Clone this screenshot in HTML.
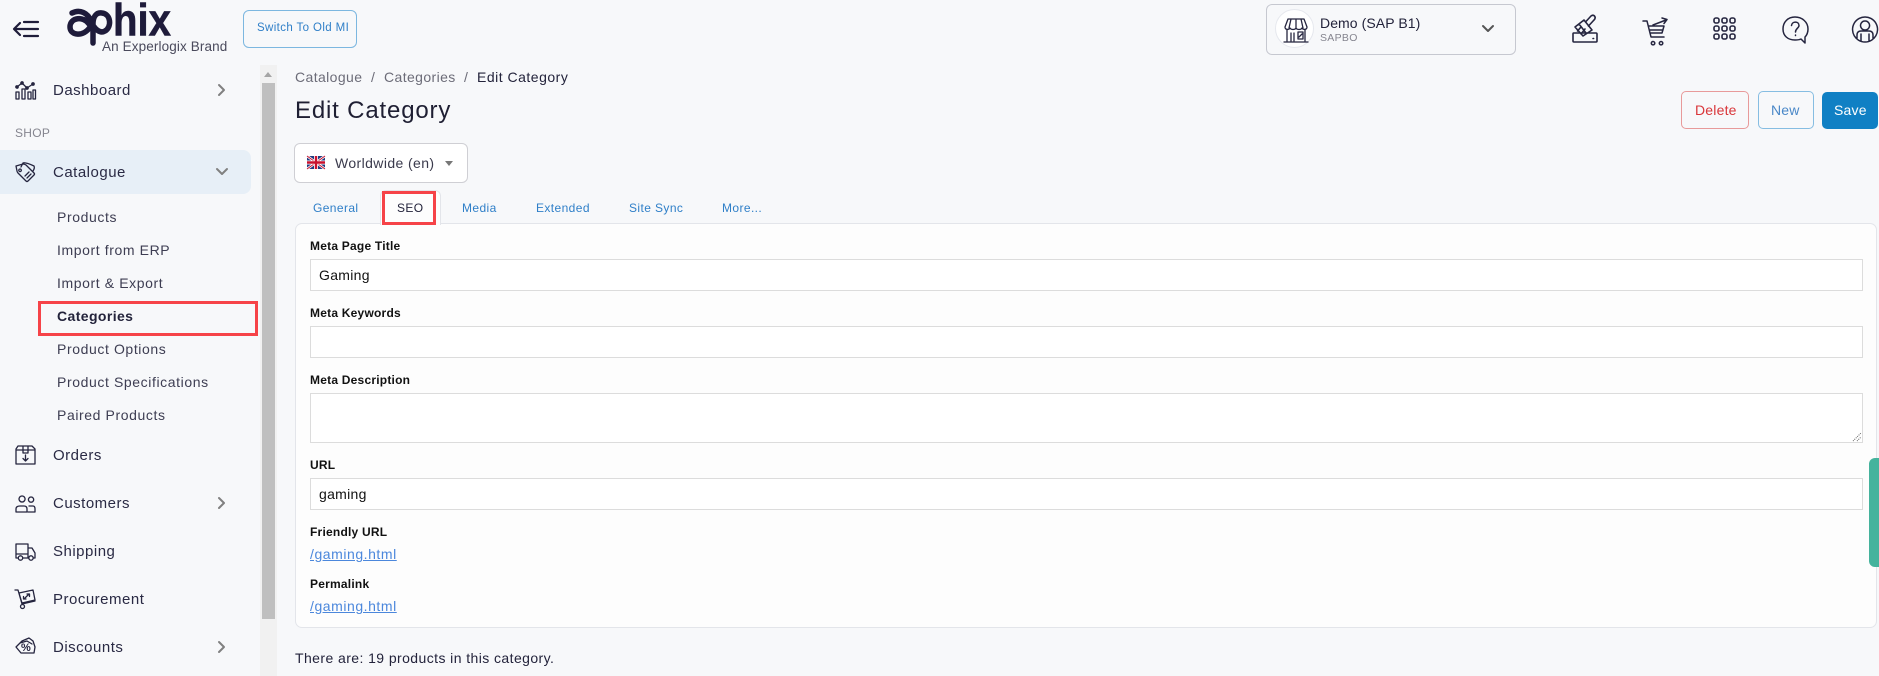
<!DOCTYPE html>
<html><head><meta charset="utf-8"><title>Edit Category</title>
<style>
*{box-sizing:border-box}
html,body{margin:0;padding:0;width:1879px;height:676px;overflow:hidden;background:#f7f8fa;font-family:"Liberation Sans",sans-serif;color:#23233b}
.t{position:absolute;white-space:nowrap;line-height:20px;height:20px}
.m{font-size:15px;letter-spacing:.5px;left:53px;color:#2a2a44}
.s{font-size:14px;letter-spacing:.6px;left:57px;color:#3d3d52}
.tab{font-size:12px;letter-spacing:.4px;color:#2f7fc8}
.l{font-size:12px;font-weight:bold;letter-spacing:.22px;left:310px;color:#111}
.b{position:absolute}
.inp{position:absolute;left:310px;width:1553px;background:#fff;border:1px solid #dcdcdc;height:32px;font-size:14px;line-height:30px;padding-left:8px;letter-spacing:.3px;color:#111}
.lk{font-size:14px;letter-spacing:.55px;left:310px;color:#4b87dc;text-decoration:underline}
svg{position:absolute;overflow:visible}
.ic{fill:none;stroke:#25253f;stroke-width:1.3;stroke-linecap:round;stroke-linejoin:round}
.ch{fill:none;stroke:#808080;stroke-width:2;stroke-linecap:round;stroke-linejoin:round}
</style></head><body>

<!-- top bar -->
<svg style="left:0;top:0" width="60" height="60"><path d="M24 22H38M15 29H38M24 36H38M20 23L14 29L20 35" fill="none" stroke="#1f1d3a" stroke-width="2.2" stroke-linecap="round" stroke-linejoin="round"/></svg>
<svg style="left:0;top:0" width="240" height="60"><title>aphix</title>
<path d="M72 13C80 9 88 13 91 21C94 29 100 34 105 31C112 27 111 14 102 13C96 12 93 17 93 24V43M89 24C84 16 70 17 70 27C70 36 84 37 90 27" fill="none" stroke="#1e1b3a" stroke-width="5.5" stroke-linecap="round" stroke-linejoin="round"/>
<text x="113" y="35.500" font-family="Liberation Sans" font-weight="bold" font-size="45" fill="#1e1b3a" stroke="#1e1b3a" stroke-width=".6" textLength="58" lengthAdjust="spacingAndGlyphs">hix</text></svg>
<div class="t" style="left:102px;top:37px;font-size:13.5px;letter-spacing:.12px;color:#4a4a5c">An Experlogix Brand</div>
<div class="b" style="left:243px;top:10px;width:114px;height:38px;border:1px solid #7cb7e0;border-radius:6px"></div>
<div class="t" style="left:257px;top:18px;font-size:11.5px;letter-spacing:.38px;color:#2f7fc8">Switch To Old MI</div>

<div class="b" style="left:1266px;top:4px;width:250px;height:51px;border:1px solid #c6c8d0;border-radius:6px"></div>
<div class="b" style="left:1275px;top:9px;width:39px;height:39px;border-radius:50%;background:#fff;border:1px solid #e6e8ee"></div>
<svg class="ic" style="left:1270px;top:4px" width="60" height="50"><path d="M15 23L18 15H34L37 23C37 26 33 26 32 24C31 26 27 26 26 24C25 26 21 26 20 24C19 26 15 26 15 23ZM21 15L19 24M26 15V24M31 15L33 24M17 26V37M35 26V37M14 38H38M21 29V37M24 29V37M28 28H33V35H28ZM29 33L32 30"/></svg>
<div class="t" style="left:1320px;top:13px;font-size:14px;letter-spacing:.08px;color:#23233b">Demo (SAP B1)</div>
<div class="t" style="left:1320px;top:28px;font-size:10.5px;letter-spacing:.3px;color:#85858f">SAPBO</div>
<svg class="ch" style="left:1480px;top:22px;stroke:#555" width="16" height="14"><path d="M3 4L8 9L13 4"/></svg>

<svg class="ic" style="left:1570px;top:13px;stroke-width:1.6" width="30" height="32"><path d="M3.500 20H26Q27 20 27 21V28Q27 29 26 29H4Q3 29 3 28V21Q3 20 3.500 20ZM23 25.500H23.600M5 14L14 7L22 17L13 23ZM9 11L16 20M7.500 18L11 14M11 21L15 16M15.500 9L21 3Q23 1.500 24.500 3Q26 5 24 7L18.500 13"/></svg>
<svg class="ic" style="left:1640px;top:16px;stroke-width:1.5" width="32" height="28"><path d="M3 5H7L11 21H24M9 10H24L22 17H11M10 14H23M13 25.500a1.700 1.700 0 1 0 .1 0M21 25.500a1.700 1.700 0 1 0 .1 0M13 9L26 4M22 2L27 3.500L24 7.500"/></svg>
<svg class="ic" style="left:1712px;top:16px;stroke-width:1.6" width="26" height="26"><g><rect x="2" y="2" width="5" height="5" rx="1.800"/><rect x="10" y="2" width="5" height="5" rx="1.800"/><rect x="18" y="2" width="5" height="5" rx="1.800"/><rect x="2" y="10" width="5" height="5" rx="1.800"/><rect x="10" y="10" width="5" height="5" rx="1.800"/><rect x="18" y="10" width="5" height="5" rx="1.800"/><rect x="2" y="18" width="5" height="5" rx="1.800"/><rect x="10" y="18" width="5" height="5" rx="1.800"/><rect x="18" y="18" width="5" height="5" rx="1.800"/></g></svg>
<svg class="ic" style="left:1780px;top:14px;stroke-width:1.5" width="30" height="30"><path d="M15 3C8 3 3 8 3 15C3 22 8 26 15 26C17 26 19 26 21 25L25 29L25 23C27 21 28 18 28 15C28 8 22 3 15 3ZM11.500 11.500C12 7 19 7 19 11.500C19 14 15.500 14.500 15.500 18M15.500 21V21.500"/></svg>
<svg class="ic" style="left:1850px;top:14px;stroke-width:1.5" width="29" height="30"><path d="M15 3a12.500 12.500 0 1 0 .1 0ZM15 7a4.500 4.500 0 1 0 .1 0ZM7 25V21Q7 17 11 17H19Q23 17 23 21V25M11 20V27M19 20V27"/></svg>

<!-- sidebar scrollbar -->
<div class="b" style="left:260px;top:65px;width:17px;height:611px;background:#f1f1f1"></div>
<div class="b" style="left:262px;top:83px;width:13px;height:536px;background:#bfbfbf"></div>
<div class="b" style="left:264px;top:72px;border-left:4px solid transparent;border-right:4px solid transparent;border-bottom:5px solid #a5a5a5"></div>

<!-- sidebar -->
<svg class="ic" style="left:15px;top:80px" width="21" height="20"><path d="M1 19V12H4V19ZM7 19V9H10V19ZM13 19V12H16V19ZM18 19V10H20.500V19ZM2 7L7 3L12 8L18 4M1 19H4"/><circle cx="2" cy="7" r="1.200"/><circle cx="7" cy="3" r="1.200"/><circle cx="12" cy="8" r="1.200"/><circle cx="18" cy="4" r="1.200"/></svg>
<div class="t m" style="top:81px">Dashboard</div>
<svg class="ch" style="left:216px;top:83px" width="12" height="14"><path d="M3 2L8 7L3 12"/></svg>
<div class="t" style="left:15px;top:123px;font-size:12px;letter-spacing:.3px;color:#85858f">SHOP</div>
<div class="b" style="left:0;top:150px;width:251px;height:44px;background:#e7eff7;border-radius:0 8px 8px 0"></div>
<svg class="ic" style="left:15px;top:162px" width="21" height="21"><path d="M1 4L8 2Q9.500 2 11 3L19 11Q20 12 19 13L13 19Q12 20 11 19L3 11Q2 10 2 9ZM5 7a1.300 1.300 0 1 0 .1 0ZM6 5L8 1Q10 0 19 4Q20 6 18 9M10 14L14 10M12 16L16 12"/></svg>
<div class="t m" style="top:163px">Catalogue</div>
<svg class="ch" style="left:215px;top:166px" width="14" height="12"><path d="M2 3L7 8L12 3"/></svg>
<div class="t s" style="top:207px">Products</div>
<div class="t s" style="top:240px">Import from ERP</div>
<div class="t s" style="top:273px">Import &amp; Export</div>
<div class="t s" style="top:306px;font-weight:bold;color:#23233b;letter-spacing:.4px">Categories</div>
<div class="b" style="left:38px;top:301px;width:220px;height:35px;border:3px solid #f64348"></div>
<div class="t s" style="top:339px">Product Options</div>
<div class="t s" style="top:372px">Product Specifications</div>
<div class="t s" style="top:405px">Paired Products</div>

<svg class="ic" style="left:15px;top:445px" width="21" height="20"><path d="M1 4L3 1H17L20 4V19H1ZM1 5H20M8 1V8H13V1M10.500 10V16M8 13.500L10.500 16L13 13.500"/></svg>
<div class="t m" style="top:446px">Orders</div>
<svg class="ic" style="left:15px;top:494px" width="21" height="20"><path d="M7 2a3 3 0 1 0 .1 0ZM16 3a2.600 2.600 0 1 0 .1 0ZM1 18V15Q1 12 5 12H9Q12 12 12 15V18ZM14 12H18Q20 12 20 15V18H13"/></svg>
<div class="t m" style="top:494px">Customers</div>
<svg class="ch" style="left:216px;top:496px" width="12" height="14"><path d="M3 2L8 7L3 12"/></svg>
<svg class="ic" style="left:15px;top:542px" width="21" height="20"><path d="M3 16H1V2H13V16H8M13 6H17L20 11V16H18M13 16H14M1 12H13"/><circle cx="5.500" cy="16" r="2.200"/><circle cx="16" cy="16" r="2.200"/></svg>
<div class="t m" style="top:542px">Shipping</div>
<svg class="ic" style="left:15px;top:589px" width="21" height="20"><path d="M0 1H3L7 15L20 12M4 4L18 1L20 11L7 14ZM9 10L14 5M12 5H14.500V7.500M11 10H8.500V7.500"/><circle cx="7.500" cy="17.500" r="2"/></svg>
<div class="t m" style="top:590px">Procurement</div>
<svg class="ic" style="left:15px;top:637px" width="21" height="20"><path d="M1 10L7 4L14 1L18 4L20 10L19 16L6 16ZM5 6L12 4L17 7"/></svg>
<div class="t" style="left:21px;top:638px;font-size:11px;font-weight:bold;color:#25253f">%</div>
<div class="t m" style="top:638px">Discounts</div>
<svg class="ch" style="left:216px;top:640px" width="12" height="14"><path d="M3 2L8 7L3 12"/></svg>

<!-- heading -->
<div class="t" style="left:295px;top:67px;font-size:14px;letter-spacing:.4px;color:#6c6c78">Catalogue</div>
<div class="t" style="left:371px;top:67px;font-size:14px;color:#6c6c78">/</div>
<div class="t" style="left:384px;top:67px;font-size:14px;letter-spacing:.4px;color:#6c6c78">Categories</div>
<div class="t" style="left:464px;top:67px;font-size:14px;color:#6c6c78">/</div>
<div class="t" style="left:477px;top:67px;font-size:14px;letter-spacing:.5px;color:#23233b">Edit Category</div>
<div class="t" style="left:295px;top:99px;font-size:24px;line-height:24px;height:24px;letter-spacing:.83px;color:#1f1f33">Edit Category</div>

<div class="b" style="left:1681px;top:91px;width:68px;height:38px;border:1px solid #e89a9a;border-radius:5px"></div>
<div class="t" style="left:1695px;top:100px;font-size:14px;letter-spacing:.2px;color:#d9363a">Delete</div>
<div class="b" style="left:1758px;top:91px;width:56px;height:38px;border:1px solid #86bde2;border-radius:5px"></div>
<div class="t" style="left:1771px;top:100px;font-size:14px;letter-spacing:.2px;color:#4a88c8">New</div>
<div class="b" style="left:1822px;top:92px;width:56px;height:37px;background:#1080c4;border-radius:5px"></div>
<div class="t" style="left:1834px;top:100px;font-size:14px;letter-spacing:.2px;color:#fff">Save</div>

<!-- language dropdown -->
<div class="b" style="left:294px;top:143px;width:174px;height:40px;background:#fff;border:1px solid #cfcfd4;border-radius:6px"></div>
<svg style="left:307px;top:156px" width="18" height="13" viewBox="0 0 18 13"><rect width="18" height="13" fill="#1f3a80"/><path d="M0 0L18 13M18 0L0 13" stroke="#fff" stroke-width="2.600"/><path d="M0 0L18 13M18 0L0 13" stroke="#c8102e" stroke-width="1"/><path d="M9 0V13M0 6.500H18" stroke="#fff" stroke-width="4"/><path d="M9 0V13M0 6.500H18" stroke="#c8102e" stroke-width="2.400"/></svg>
<div class="t" style="left:335px;top:153px;font-size:14px;letter-spacing:.4px;color:#3a3a4c">Worldwide (en)</div>
<div class="b" style="left:445px;top:161px;border-left:4.500px solid transparent;border-right:4.500px solid transparent;border-top:5px solid #777"></div>

<!-- card -->
<div class="b" style="left:295px;top:223px;width:1582px;height:405px;background:#fdfdfd;border:1px solid #e3e5ea;border-radius:7px"></div>

<!-- tabs -->
<div class="t tab" style="left:313px;top:198px">General</div>
<div class="b" style="left:380px;top:190px;width:61px;height:35px;background:#fdfdfd;border:1px solid #e3e5ea;border-bottom:0;border-radius:6px 6px 0 0"></div>
<div class="t tab" style="left:397px;top:198px;color:#23233b">SEO</div>
<div class="b" style="left:382px;top:191px;width:54px;height:34px;border:3px solid #f64348"></div>
<div class="t tab" style="left:462px;top:198px">Media</div>
<div class="t tab" style="left:536px;top:198px">Extended</div>
<div class="t tab" style="left:629px;top:198px">Site Sync</div>
<div class="t tab" style="left:722px;top:198px">More...</div>

<!-- form -->
<div class="t l" style="top:236px">Meta Page Title</div>
<div class="inp" style="top:259px">Gaming</div>
<div class="t l" style="top:303px">Meta Keywords</div>
<div class="inp" style="top:326px"></div>
<div class="t l" style="top:370px">Meta Description</div>
<div class="inp" style="top:393px;height:50px"></div>
<svg style="left:1852px;top:432px" width="10" height="10"><path d="M1 9L9 1M5 9L9 5" stroke="#666" stroke-width="1" stroke-dasharray="1 1"/></svg>
<div class="t l" style="top:455px">URL</div>
<div class="inp" style="top:478px">gaming</div>
<div class="t l" style="top:522px">Friendly URL</div>
<div class="t lk" style="top:544px">/gaming.html</div>
<div class="t l" style="top:574px">Permalink</div>
<div class="t lk" style="top:596px">/gaming.html</div>

<div class="t" style="left:295px;top:648px;font-size:14px;letter-spacing:.42px;color:#23233b">There are: 19 products in this category.</div>

<div class="b" style="left:1869px;top:458px;width:10px;height:109px;background:#45b39d;border-radius:6px 0 0 6px"></div>
</body></html>
